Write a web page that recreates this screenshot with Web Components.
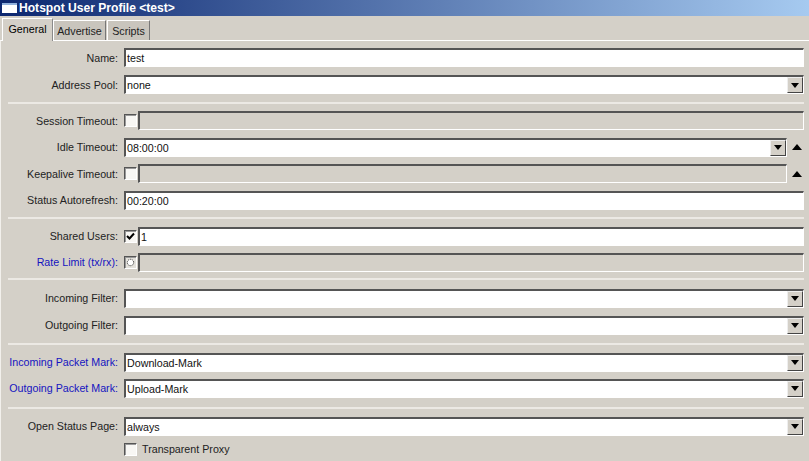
<!DOCTYPE html>
<html>
<head>
<meta charset="utf-8">
<title>Hotspot User Profile</title>
<style>
  html, body { margin: 0; height: 100%; background: #d4d0c8; overflow: hidden; }
  body { font: 10.7px "Liberation Sans", Arial, sans-serif; color: #000; }
</style>
</head>
<body>
<profile-window>
  <title-bar slot="title">Hotspot User Profile &lt;test&gt;</title-bar>
  <tab-strip slot="tabs"></tab-strip>

  <form-group style="--gap:8px">
    <form-row label="Name:" value="test"></form-row>
    <form-row label="Address Pool:" value="none" kind="select"></form-row>
  </form-group>
  <form-group style="--gap:7.67px;--bottom:7px">
    <form-row label="Session Timeout:" check="off" kind="disabled"></form-row>
    <form-row label="Idle Timeout:" value="08:00:00" kind="select" up></form-row>
    <form-row label="Keepalive Timeout:" check="off" kind="disabled" up></form-row>
    <form-row label="Status Autorefresh:" value="00:20:00"></form-row>
  </form-group>
  <form-group style="--top:8px;--bottom:6px">
    <form-row label="Shared Users:" check="on" value="1"></form-row>
    <form-row label="Rate Limit (tx/rx):" check="mixed" kind="disabled" blue></form-row>
  </form-group>
  <form-group style="--top:9px;--gap:8px">
    <form-row label="Incoming Filter:" kind="select"></form-row>
    <form-row label="Outgoing Filter:" kind="select"></form-row>
  </form-group>
  <form-group style="--top:8px;--bottom:9px">
    <form-row label="Incoming Packet Mark:" value="Download-Mark" kind="select" blue></form-row>
    <form-row label="Outgoing Packet Mark:" value="Upload-Mark" kind="select" blue></form-row>
  </form-group>
  <form-group last style="--top:8px">
    <form-row label="Open Status Page:" value="always" kind="select"></form-row>
    <check-row>Transparent Proxy</check-row>
  </form-group>
</profile-window>

<script>
// shared sunken look of the old windows controls
const SUNKEN = `
  border-top: 2px solid #555;
  border-left: 2px solid #555;
  border-right: 1px solid #fff;
  border-bottom: 1px solid #fff;
  box-sizing: border-box;
`;

const CHECK_BOX = `
  .box {
    flex: none;
    box-sizing: border-box;
    width: 13px;
    height: 13px;
    background: #f8f7f4;
    border-top: 1px solid #555;
    border-left: 1px solid #555;
    border-right: 1px solid #fff;
    border-bottom: 1px solid #fff;
    box-shadow: inset 1px 1px 0 #999;
    display: flex;
    align-items: center;
    justify-content: center;
  }
  .box.mixed { background: #e4e2dc; }
  .box svg { display: block; }
`;

function define(name, css, html) {
  customElements.define(name, class extends HTMLElement {
    constructor() {
      super();
      this.attachShadow({ mode: 'open' });
    }
    connectedCallback() {
      this.shadowRoot.innerHTML = `<style>${css}</style>${typeof html === 'function' ? html(this) : html}`;
    }
  });
}

define('profile-window', `
  :host { display: flex; flex-direction: column; height: 461px; width: 809px; }
  .panel {
    flex: 1;
    border-top: 1px solid #fff;
    border-left: 1px solid #f2f0ec;
    margin-top: -1px;
    padding: 0 5px 0 0;
  }
`, `<slot name="title"></slot><slot name="tabs"></slot><div class="panel"><slot></slot></div>`);

define('title-bar', `
  :host {
    display: flex;
    flex: none;
    align-items: center;
    gap: 2px;
    height: 16px;
    padding-left: 2px;
    background: linear-gradient(90deg, #0c2770 0%, #a6caf0 100%);
    color: #fff;
    font: bold 12.1px "Liberation Sans", Arial, sans-serif;
    white-space: nowrap;
  }
  .icon { width: 15px; height: 10px; background: #fff; border-top: 2px solid #8fb0dc; box-sizing: border-box; }
`, `<span class="icon"></span><slot></slot>`);

define('tab-strip', `
  :host {
    display: flex;
    flex: none;
    align-items: flex-end;
    height: 25px;
    padding-left: 2px;
    box-sizing: border-box;
    position: relative;
    z-index: 1;
  }
  .tab {
    box-sizing: border-box;
    height: 20px;
    margin-bottom: 1px;
    margin-right: 1px;
    padding-top: 4px;
    text-align: center;
    background: #c9c5bd;
    border-top: 1px solid #fff;
    border-left: 1px solid #fff;
    border-right: 1px solid #777;
    color: #222;
  }
  .active { height: 23px; margin-bottom: 0; margin-right: 0; background: #d4d0c8; color: #000; border-right-color: #8a8a8a; }
`, `
  <div class="tab active" style="width:51px">General</div>
  <div class="tab" style="width:53px">Advertise</div>
  <div class="tab" style="width:43px">Scripts</div>
`);

define('form-group', `
  :host {
    display: flex;
    flex-direction: column;
    gap: var(--gap, 7px);
    padding: var(--top, 7px) 0 var(--bottom, 8px);
    margin-left: 7px;
    border-bottom: 2px solid;
    border-image: linear-gradient(#c8c4bc 50%, #ece9e4 50%) 2;
  }
  :host([last]) { border-bottom: none; border-image: none; }
`, `<slot></slot>`);

define('form-row', `
  :host { display: flex; align-items: center; height: 19px; margin-left: -7px; }
  .label { flex: none; width: 117px; margin-right: 6px; text-align: right; color: #222; white-space: nowrap; }
  .blue { color: #1414c0; }
  ${CHECK_BOX}
  .box { margin-right: 1px; }
  .field {
    ${SUNKEN}
    flex: 1;
    min-width: 0;
    height: 19px;
    background: #fff;
    display: flex;
    align-items: center;
    padding-left: 1px;
    color: #111;
    white-space: nowrap;
  }
  .field.disabled { background: #d4d0c8; }
  .value { flex: 1; }
  .btn {
    flex: none;
    box-sizing: border-box;
    width: 16px;
    height: 16px;
    background: #d4d0c8;
    border: 1px solid;
    border-color: #eee #444 #444 #eee;
    display: flex;
    align-items: center;
    justify-content: center;
  }
  .up { flex: none; width: 17px; display: flex; justify-content: flex-end; padding-right: 2px; box-sizing: border-box; }
  svg { display: block; }
`, el => {
  const has = a => el.hasAttribute(a);
  const kind = el.getAttribute('kind') || 'text';
  const check = el.getAttribute('check');
  let box = '';
  if (check === 'off') box = '<span class="box"></span>';
  if (check === 'on') box = '<span class="box"><svg width="9" height="9" viewBox="0 0 9 9"><path d="M1 4l2.5 2.5L8 1.5" fill="none" stroke="#000" stroke-width="2"/></svg></span>';
  if (check === 'mixed') box = '<span class="box mixed"><svg width="9" height="9" viewBox="0 0 9 9"><circle cx="4.5" cy="4.5" r="3.2" fill="#fff" stroke="#222" stroke-dasharray="1 1"/></svg></span>';
  const btn = kind === 'select'
    ? '<span class="btn"><svg width="8" height="5" viewBox="0 0 8 5"><path d="M0 0h8L4 5z"/></svg></span>'
    : '';
  const up = has('up')
    ? '<span class="up"><svg width="10" height="6" viewBox="0 0 10 6"><path d="M5 0l5 6H0z"/></svg></span>'
    : '';
  return `
    <span class="label ${has('blue') ? 'blue' : ''}">${el.getAttribute('label')}</span>
    ${box}
    <span class="field ${kind}"><span class="value">${el.getAttribute('value') || ''}</span>${btn}</span>
    ${up}
  `;
});

define('check-row', `
  :host { display: flex; align-items: center; height: 13px; padding-left: 123px; margin-left: -7px; color: #222; white-space: nowrap; }
  ${CHECK_BOX}
  .box { margin-right: 5px; }
`, `<span class="box"></span><slot></slot>`);
</script>
</body>
</html>
